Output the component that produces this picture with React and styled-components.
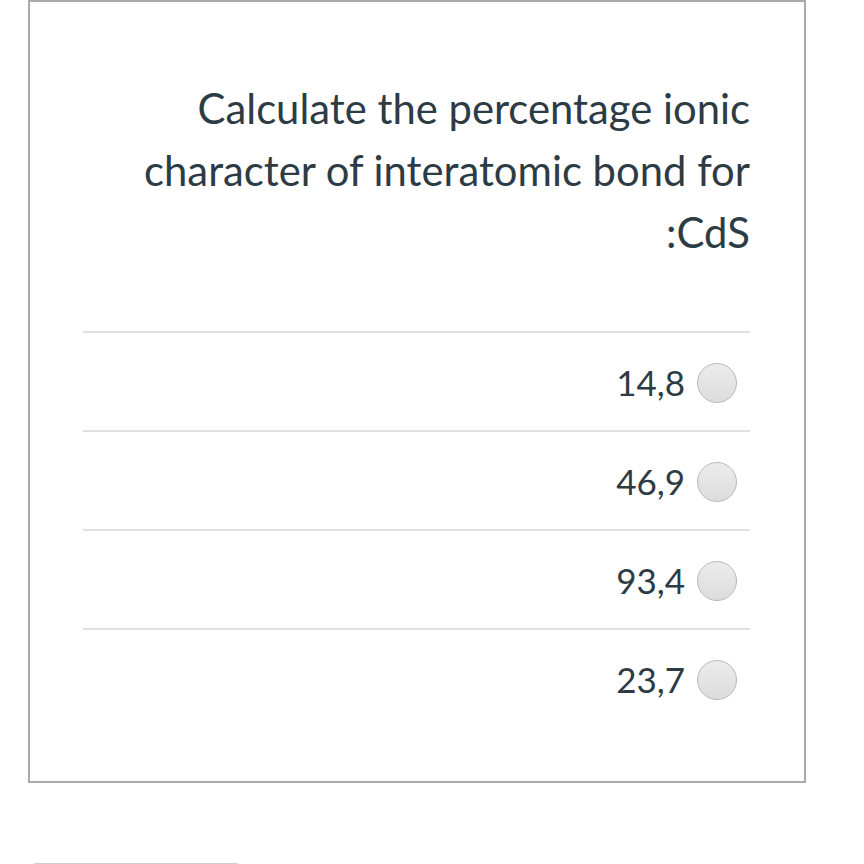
import React from 'react';
import styled, { createGlobalStyle } from 'styled-components';

const GlobalStyle = createGlobalStyle`
  body {
    margin: 0;
    background: #fff;
    font-family: Lato, "Open Sans", sans-serif;
    color: #2d3b45;
  }
`;

const Page = styled.div`
  padding-left: 28px;
  width: 778px;
`;

const Card = styled.div`
  border: 2px solid #aaaaaa;
  padding: 75px 54px 54px 53px;
`;

const Question = styled.p`
  margin: 0 0 68px;
  font-size: 41.8px;
  line-height: 62px;
  text-align: right;
`;

const Answers = styled.div`
  display: flex;
  flex-direction: column;
`;

const Answer = styled.label`
  height: 99px;
  display: flex;
  align-items: center;
  justify-content: flex-end;
  gap: 12px;
  padding-right: 13px;
  border-top: 2px solid #e0e0e0;
  font-size: 35px;
  box-sizing: border-box;
`;

const Radio = styled.span`
  width: 40px;
  height: 40px;
  border-radius: 50%;
  border: 1.5px solid #b9b9b9;
  background: linear-gradient(#ececec, #dcdcdc);
  box-sizing: border-box;
  margin-top: 2px;
`;

const Footer = styled.div`
  padding-top: 80px;
`;

const Button = styled.div`
  width: 208px;
  height: 40px;
  margin-left: 2px;
  border: 2px solid #c7cdd1;
  border-radius: 6px;
  background: #f5f5f5;
`;

const options = ['14,8', '46,9', '93,4', '23,7'];

export default function App() {
  return (
    <Page>
      <GlobalStyle />
      <Card>
        <Question>
          Calculate the percentage ionic character of interatomic bond for :CdS
        </Question>
        <Answers>
          {options.map(o => (
            <Answer key={o}>
              {o}
              <Radio />
            </Answer>
          ))}
        </Answers>
      </Card>
      <Footer>
        <Button />
      </Footer>
    </Page>
  );
}
